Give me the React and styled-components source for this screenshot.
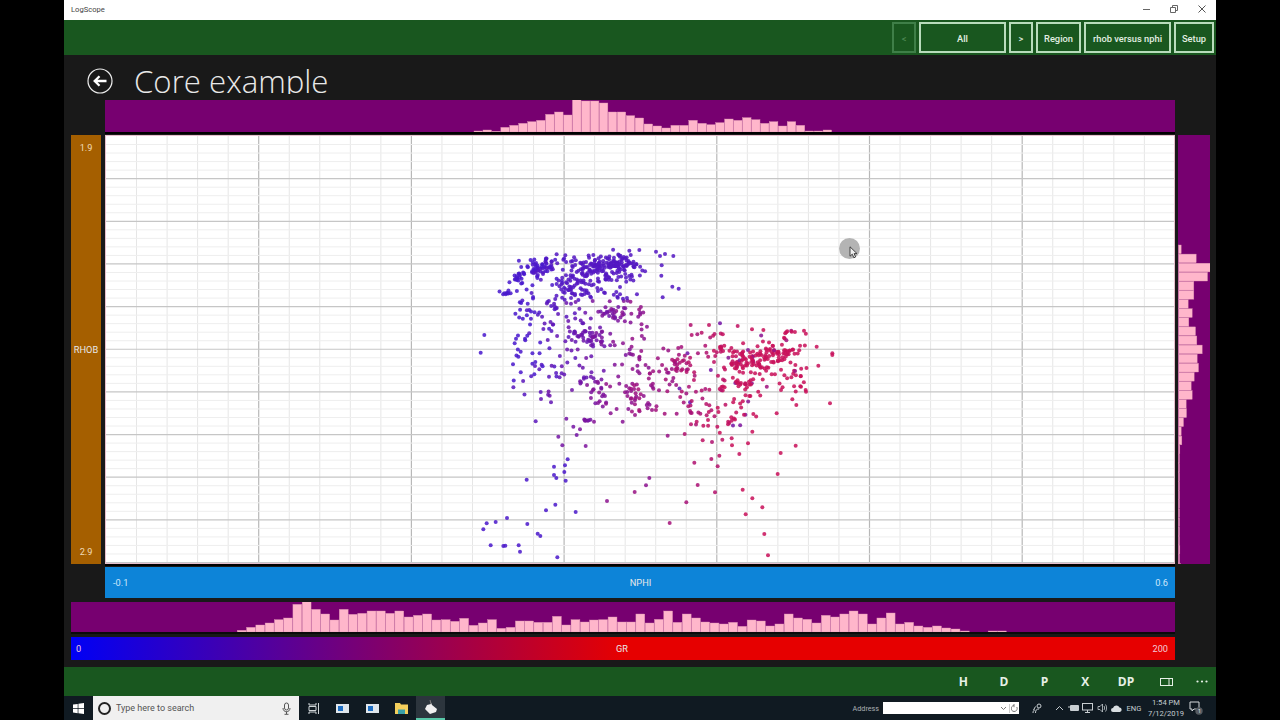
import React from "react";
import styled, { createGlobalStyle } from "styled-components";

const Global = createGlobalStyle`
  html, body { margin: 0; padding: 0; background: #000; height: 100%; overflow: hidden; }
  * { box-sizing: border-box; }
  body { font-family: Roboto, "Open Sans", "Liberation Sans", sans-serif; }
`;

const Page = styled.div`width:1280px;height:720px;background:#000;display:flex;justify-content:center;`;
const Window = styled.div`width:1152px;height:720px;display:flex;flex-direction:column;background:#191919;`;

const TitleBar = styled.div`height:20px;background:#fff;display:flex;align-items:center;padding:0 0 2px 7px;color:#444;font-size:7.6px;`;
const TitleText = styled.span`flex:1;`;
const WinControl = styled.span`width:28px;height:18px;display:flex;align-items:center;justify-content:center;color:#555;`;
const WinControls = styled.div`display:flex;`;

const TopBar = styled.div`height:35px;background:#19571f;display:flex;justify-content:flex-end;align-items:center;gap:3px;padding-right:2px;`;
const ActionButton = styled.button`
  width:${p => p.$w}px;height:31px;margin:0;padding:1px 0 0;background:#19571f;
  border:2px solid ${p => (p.$off ? "#3f7f48" : "#b9dcbc")};
  color:${p => (p.$off ? "#4f8a55" : "#e2efe2")};
  font:500 9.3px Roboto, sans-serif;
`;

const Heading = styled.div`height:45px;display:flex;align-items:flex-start;padding-left:23px;gap:21px;overflow:hidden;`;
const BackButton = styled.div`width:26px;height:26px;margin-top:13px;color:#fff;display:flex;`;
const Title = styled.h1`margin:0;height:39px;overflow:hidden;font:300 31.2px/52px "Open Sans", sans-serif;color:#e8e8e8;`;

const ChartGrid = styled.div`
  display:grid;padding-left:7px;
  grid-template-columns:30px 4px 1070px 3px 32px;
  grid-template-rows:32px 3px 429px 3px 31px 4px 30px 5px 23px;
`;
const TopHist = styled.div`grid-column:3;grid-row:1;background:#770070;box-shadow:0 2px 0 #000;`;
const YAxis = styled.div`grid-column:1;grid-row:3;background:#a55f00;color:#f1dcb8;font-size:9.2px;display:flex;flex-direction:column;align-items:center;justify-content:space-between;padding:7px 0 7px;`;
const Plot = styled.div`grid-column:3;grid-row:3;position:relative;background:#fff;border:1px solid #e6bfcd;box-shadow:0 2px 0 #000;`;
const SideHist = styled.div`grid-column:5;grid-row:3;background:#770070;`;
const XAxis = styled.div`grid-column:3;grid-row:5;background:#0d84d8;color:#cfe8fb;font-size:9.2px;display:grid;grid-template-columns:1fr auto 1fr;align-items:center;padding:0 7px 0 8px;`;
const BottomHist = styled.div`grid-column:1 / 4;grid-row:7;background:#770070;box-shadow:0 2px 0 #0a0a0a;`;
const ColorBar = styled.div`grid-column:1 / 4;grid-row:9;background:linear-gradient(90deg,#0000f5 0%,#e60000 50%);color:#f3c9d8;font-size:9.2px;display:grid;grid-template-columns:1fr auto 1fr;align-items:center;padding:0 7px 0 5px;`;
const AxisName = styled.span`color:#e8e8e8;`;
const AxisMax = styled.span`text-align:right;`;
const Graphic = styled.svg`display:block;width:100%;height:100%;`;

const CommandBar = styled.div`height:29px;margin-top:7px;background:#19571f;display:flex;justify-content:flex-end;align-items:center;color:#e6f0e6;`;
const Cmd = styled.span`width:${p => p.$w || 40.7}px;text-align:center;font:700 12px "Open Sans", sans-serif;display:flex;justify-content:center;`;

const Taskbar = styled.div`height:24px;background:#101a22;display:flex;align-items:center;color:#d8dde0;`;
const StartBtn = styled.div`width:29px;display:flex;justify-content:center;`;
const SearchBox = styled.div`width:206px;height:24px;background:#f0f0f0;display:flex;align-items:center;padding:0 8px 0 5px;color:#555;font-size:9px;`;
const SearchCircle = styled.span`width:13px;height:13px;border:2px solid #222;border-radius:50%;margin-right:5px;`;
const SearchText = styled.span`flex:1;`;
const TaskIcon = styled.div`width:29.3px;height:24px;display:flex;align-items:center;justify-content:center;background:${p => (p.$active ? "#2c353d" : "transparent")};border-bottom:${p => (p.$active ? "2px solid #58c8a8" : "none")};`;
const TaskGap = styled.div`flex:1;`;
const AddressLabel = styled.span`font-size:7.2px;color:#aab0b4;margin-right:4px;`;
const AddressBox = styled.div`width:136px;height:12px;background:#fff;margin-right:3px;display:flex;align-items:center;justify-content:flex-end;color:#777;`;
const AddrIcon = styled.span`width:${p => p.$w}px;display:flex;justify-content:center;border-left:${p => (p.$sep ? "1px solid #ccc" : "none")};`;
const Tray = styled.div`display:flex;align-items:center;width:${p => p.$w}px;justify-content:center;`;
const TrayText = styled.span`font-size:7.6px;color:#c4cbd0;`;
const Clock = styled.div`width:44px;font-size:7.6px;line-height:11px;text-align:center;color:#c4cbd0;`;

const Halo = styled.span`position:absolute;left:733px;top:102px;width:21px;height:21px;border-radius:50%;background:#b4b4b4;`;
const Pointer = styled.svg`position:absolute;left:743px;top:110px;width:9px;height:13px;`;

/* ---- histogram data, measured off the picture ---- */
const topBars = [3,6,2,14,20,26,31,35,53,60,51,97,93,93,87,60,60,49,42,24,18,12,20,20,35,26,22,28,39,35,43,37,26,31,18,31,20,3,3,6].map(v => v / 3);
const bottomBars = [5,14,21,27,37,42,83,92,68,54,36,68,53,56,63,63,56,63,45,50,54,36,37,32,41,20,27,37,11,14,33,33,29,29,47,21,37,30,36,37,45,30,30,54,27,38,63,29,54,42,30,27,24,29,17,36,33,18,24,54,42,38,27,50,45,54,63,54,24,42,57,24,29,18,14,18,12,9,3,0,0,3,3].map(v => v / 3);
const sideBars = [8,53,96,87,46,46,29,41,31,51,55,71,56,60,47,38,41,23,24,15,8,10,4,3,3,3,3,3,3,3,3,3,3,4,3,6].map(v => v / 3);

function HBars({ width, height, data, start, step }) {
  return (
    <Graphic viewBox={`0 0 ${width} ${height}`} preserveAspectRatio="none">
      {data.map((v, i) => v > 0 && (
        <rect key={i} x={start + i * step} y={height - v} width={step - 0.4} height={v} fill="#ffb6cb" stroke="#d98fb0" strokeWidth=".4" />
      ))}
    </Graphic>
  );
}

function SideBars() {
  return (
    <Graphic viewBox="0 0 32 429" preserveAspectRatio="none">
      {sideBars.map((v, i) => (
        <rect key={i} x="0.5" y={110 + i * 9.1} width={v} height={8.7} fill="#ffb6cb" stroke="#d98fb0" strokeWidth=".4" />
      ))}
    </Graphic>
  );
}

/* ---- scatter: coordinates are measured in a 3x crop whose corner is (470,240) ---- */
let seed = 12345;
const rnd = () => { seed = (seed * 16807) % 2147483647; return seed / 2147483647; };
const gauss = () => (rnd() + rnd() + rnd() - 1.5) / 0.5;

const denseCores = [
  [390,85,52,20,125],[460,68,28,12,34],[310,135,22,20,40],[232,68,20,16,20],[190,95,26,12,28],[135,115,13,8,10],[110,160,10,6,9],
  [340,285,32,14,36],[440,215,24,11,15],[400,300,25,12,12],[840,360,42,14,56],[905,345,42,14,38],[620,375,24,14,22],[810,430,20,6,14],
  [745,328,14,8,8],[965,395,14,12,8],[385,490,12,8,5],[355,542,14,4,6],
];
const wideAreas = [
  [130,60,520,240,150],[130,240,540,470,115],[650,270,1010,470,110],[480,320,700,500,45],[380,430,560,520,32],[660,470,860,580,34],
];
const sparse = [
  [40,868],[50,850],[77,846],[111,834],[172,852],[203,881],[211,888],[62,916],[100,918],[106,917],[146,916],[150,935],[262,952],
  [228,811],[256,794],[317,816],[170,719],[252,680],[285,676],[293,658],[283,696],[252,705],[259,714],[287,722],[411,783],[494,756],
  [528,736],[538,714],[599,849],[649,787],[683,735],[735,757],[818,749],[847,775],[877,802],[827,823],[883,882],[894,946],[923,702],
  [932,639],[977,617],[834,610],[847,575],[808,642],[748,647],[724,657],[743,679],[673,668],[698,601],[726,606],[757,599],[785,595],
  [786,616],[593,587],[644,582],[347,618],[277,616],[265,590],[197,544],[213,477],[239,467],[243,487],[43,285],[32,338],[129,373],
  [610,48],[585,42],[570,48],[558,35],[508,30],[478,32],[607,140],[626,146],[578,172],[575,76],[574,107],[1087,340],[1087,345],
  [1045,377],[1080,490],[1040,320],[1008,455],[993,440],[979,495],[967,478],[920,520],[850,522],[822,524],[785,542],[742,560],
  [663,553],[680,545],[700,557],[691,521],[710,526],[724,511],[584,521],[620,521],[665,519],[495,525],[475,507],[546,510],[458,545],
  [372,545],[345,542],[289,536],[320,585],[330,568],[310,560],[138,296],[165,296],[134,310],[152,335],[145,350],[195,378],[208,388],
  [193,403],[237,410],[275,400],[662,255],[717,255],[750,250],[803,258],[846,268],[1002,272],[965,275],[665,285],[682,283],
];
const colorFor = (x, y) => {
  let t = (x - 170) / 620 + (rnd() - 0.5) * 0.2;
  if (y > 420 && x < 520) t += 0.12;
  if (y < 180) t = Math.min(t, 0.14) - 0.05;
  if (y > 640 && x < 320) t = 0.02;
  if (x > 600 && y < 640 && rnd() < 0.05) t -= 0.55;
  t = Math.max(0, Math.min(1, t));
  const r = Math.round(72 + t * 128), g = Math.round(24 - t * 8), b = Math.round(205 - t * 115);
  return `rgb(${r},${g},${b})`;
};
const dots = [];
denseCores.forEach(([cx, cy, rx, ry, n]) => {
  for (let i = 0; i < n; i++) dots.push([cx + gauss() * rx, cy + gauss() * ry]);
});
wideAreas.forEach(([x0, y0, x1, y1, n]) => {
  for (let i = 0; i < n; i++) dots.push([x0 + rnd() * (x1 - x0), y0 + rnd() * (y1 - y0)]);
});
sparse.forEach(p => dots.push(p));
const points = dots.map(([zx, zy]) => ({
  x: 470 + zx / 3 - 106, y: 240 + zy / 3 - 136, c: colorFor(zx, zy),
}));

const minorX = Array.from({ length: 35 }, (_, i) => (i + 1) * 30.54);
const minorY = Array.from({ length: 50 }, (_, i) => (i + 1) * 8.53);

function PlotArea() {
  return (
    <Graphic viewBox="0 0 1068 427" preserveAspectRatio="none">
      {minorX.map((x, i) => (
        <line key={i} x1={x} x2={x} y1="0" y2="427" stroke={(i + 1) % 5 === 0 ? "#b8b8b8" : "#e6e6e6"} strokeWidth={(i + 1) % 5 === 0 ? 1.2 : 1} />
      ))}
      {minorY.map((y, i) => (
        <line key={i} x1="0" x2="1068" y1={y} y2={y} stroke={(i + 1) % 5 === 0 ? "#c6c6c6" : "#eeeeee"} strokeWidth={(i + 1) % 5 === 0 ? 1.2 : 1} />
      ))}
      {points.map((p, i) => <circle key={i} cx={p.x} cy={p.y} r="2" fill={p.c} opacity=".86" />)}
    </Graphic>
  );
}

/* ---- icons ---- */
const Svg = ({ w, h, children, ...rest }) => <svg width={w} height={h} viewBox={`0 0 ${w} ${h}`} fill="none" {...rest}>{children}</svg>;

const BackIcon = () => (
  <Svg w={26} h={26}>
    <circle cx="13" cy="13" r="12" stroke="#eee" strokeWidth="1.2" />
    <path d="M19.5 13H8M12.5 8.2 7.7 13l4.8 4.8" stroke="#fff" strokeWidth="2.3" />
  </Svg>
);
const WinLogo = () => (
  <Svg w={11} h={11}><path d="M0 1.6 4.7.9v4.3H0zM5.4.8 11 0v5.2H5.4zM0 5.9h4.7v4.3L0 9.5zM5.4 5.9H11V11l-5.6-.8z" fill="#fff" /></Svg>
);
const MicIcon = () => (
  <Svg w={9} h={13}><rect x="2.5" y="1" width="4" height="7" rx="2" stroke="#555" /><path d="M1 6c0 5 7 5 7 0M4.5 9.5V12M2.5 12.3h4" stroke="#555" /></Svg>
);
const TaskViewIcon = () => (
  <Svg w={12} h={11}><path d="M1 0v2h7V0M1 3.5h7v4H1zM1 11V9h7v2M10.5 0v11" stroke="#cfd5d8" /></Svg>
);
const WindowAppIcon = () => (
  <Svg w={13} h={9}><rect width="13" height="9" fill="#dfe6ec" /><rect x="2" y="2" width="5" height="5" fill="#1e6fc4" /></Svg>
);
const FolderIcon = () => (
  <Svg w={13} h={12}><path d="M0 1h5l1 1.5h7V12H0z" fill="#f3cf5c" /><rect x="3" y="7.5" width="7" height="4.5" fill="#3aa0a8" /></Svg>
);
const AppIcon = () => (
  <Svg w={13} h={14}><path d="M6 0 7 4 3 5 1 9l5 5 6-2 1-3-5-4z" fill="#f0f0f0" /><path d="M6 0 7 4" stroke="#777" /></Svg>
);
const Chevron = ({ color = "#777" }) => <Svg w={7} h={5}><path d="m1 1 2.5 2.5L6 1" stroke={color} /></Svg>;
const RefreshIcon = () => <Svg w={7} h={9}><path d="M3 1.5a3 3 0 1 0 2.8 1.5M3 0v3.2" stroke="#777" /></Svg>;
const PeopleIcon = () => (
  <Svg w={11} h={11}><circle cx="7" cy="3" r="2" stroke="#c8ced2" /><path d="M3.5 10c0-3 1-4 3.5-4M1 10c0-2 .7-3 2-3M3.5 3.5 1.5 7" stroke="#c8ced2" /></Svg>
);
const CaretUp = () => <Svg w={9} h={6}><path d="m1 5 3.5-3.5L8 5" stroke="#c8ced2" /></Svg>;
const BatteryIcon = () => <Svg w={11} h={8}><rect x="2" y="1" width="9" height="6" rx="1" fill="#c8ced2" /><path d="M0 3h2" stroke="#c8ced2" /></Svg>;
const NetIcon = () => <Svg w={11} h={10}><rect x=".5" y=".5" width="10" height="6.5" stroke="#c8ced2" /><path d="M5.5 7v2.5M3 9.5h5" stroke="#c8ced2" /></Svg>;
const VolumeIcon = () => <Svg w={10} h={10}><path d="M1 3.5h2L5.5 1v8L3 6.5H1zM7 3c.8 1.2.8 2.8 0 4M8.5 1.5c1.5 2 1.5 5 0 7" stroke="#c8ced2" strokeWidth=".8" /></Svg>;
const CloudIcon = () => <Svg w={11} h={7}><path d="M2 7a2 2 0 0 1 0-4 3.5 3.5 0 0 1 6.5-.5A2.3 2.3 0 0 1 9 7z" fill="#d8dde0" /></Svg>;
const NoteIcon = () => (
  <Svg w={15} h={14}>
    <path d="M1 1h9v7H5L3 10V8H1z" stroke="#d4d9dc" />
    <circle cx="10" cy="10" r="3.7" fill="#555c62" />
    <text x="8.8" y="12.3" fontSize="6" fill="#eee" fontFamily="Open Sans, sans-serif">1</text>
  </Svg>
);
const PanelIcon = () => <Svg w={13} h={8}><rect x=".5" y=".5" width="12" height="7" stroke="#e6f0e6" /><path d="M9 0v8" stroke="#e6f0e6" /></Svg>;
const DotsIcon = () => <Svg w={12} h={3}><circle cx="1.5" cy="1.5" r="1.1" fill="#e6f0e6" /><circle cx="6" cy="1.5" r="1.1" fill="#e6f0e6" /><circle cx="10.5" cy="1.5" r="1.1" fill="#e6f0e6" /></Svg>;

export default function App() {
  return (
    <Page>
      <Global />
      <Window>
        <TitleBar>
          <TitleText>LogScope</TitleText>
          <WinControls>
            <WinControl><Svg w={7} h={3}><path d="M0 1.5h7" stroke="#666" /></Svg></WinControl>
            <WinControl><Svg w={8} h={8}><path d="M.5 2.5h5v5h-5zM2.5 2.5v-2h5v5h-2" stroke="#666" /></Svg></WinControl>
            <WinControl><Svg w={8} h={8}><path d="m.5.5 7 7m0-7-7 7" stroke="#555" /></Svg></WinControl>
          </WinControls>
        </TitleBar>
        <TopBar>
          <ActionButton $w={24} $off>&lt;</ActionButton>
          <ActionButton $w={87}>All</ActionButton>
          <ActionButton $w={24}>&gt;</ActionButton>
          <ActionButton $w={45}>Region</ActionButton>
          <ActionButton $w={87}>rhob versus nphi</ActionButton>
          <ActionButton $w={40}>Setup</ActionButton>
        </TopBar>
        <Heading>
          <BackButton><BackIcon /></BackButton>
          <Title>Core example</Title>
        </Heading>
        <ChartGrid>
          <TopHist><HBars width={1070} height={32} data={topBars} start={369} step={8.95} /></TopHist>
          <YAxis><span>1.9</span><AxisName>RHOB</AxisName><span>2.9</span></YAxis>
          <Plot>
            <PlotArea />
            <Halo />
            <Pointer viewBox="0 0 9 13"><path d="M1 .8v9.400l2.300-2 1.600 3.600 1.700-.8-1.500-3.400H8z" fill="#efefef" stroke="#333" strokeWidth=".9" /></Pointer>
          </Plot>
          <SideHist><SideBars /></SideHist>
          <XAxis><span>-0.1</span><AxisName>NPHI</AxisName><AxisMax>0.6</AxisMax></XAxis>
          <BottomHist><HBars width={1104} height={30} data={bottomBars} start={166.3} step={9.27} /></BottomHist>
          <ColorBar><span>0</span><AxisName>GR</AxisName><AxisMax>200</AxisMax></ColorBar>
        </ChartGrid>
        <CommandBar>
          <Cmd>H</Cmd><Cmd>D</Cmd><Cmd>P</Cmd><Cmd>X</Cmd><Cmd>DP</Cmd>
          <Cmd><PanelIcon /></Cmd>
          <Cmd $w={29}><DotsIcon /></Cmd>
        </CommandBar>
        <Taskbar>
          <StartBtn><WinLogo /></StartBtn>
          <SearchBox>
            <SearchCircle />
            <SearchText>Type here to search</SearchText>
            <MicIcon />
          </SearchBox>
          <TaskIcon><TaskViewIcon /></TaskIcon>
          <TaskIcon><WindowAppIcon /></TaskIcon>
          <TaskIcon><WindowAppIcon /></TaskIcon>
          <TaskIcon><FolderIcon /></TaskIcon>
          <TaskIcon $active><AppIcon /></TaskIcon>
          <TaskGap />
          <AddressLabel>Address</AddressLabel>
          <AddressBox>
            <AddrIcon $w={11}><Chevron /></AddrIcon>
            <AddrIcon $w={10} $sep><RefreshIcon /></AddrIcon>
          </AddressBox>
          <Tray $w={30}><PeopleIcon /></Tray>
          <Tray $w={14}><CaretUp /></Tray>
          <Tray $w={14}><BatteryIcon /></Tray>
          <Tray $w={15}><NetIcon /></Tray>
          <Tray $w={14}><VolumeIcon /></Tray>
          <Tray $w={15}><CloudIcon /></Tray>
          <Tray $w={20}><TrayText>ENG</TrayText></Tray>
          <Clock>1:54 PM<br />7/12/2019</Clock>
          <Tray $w={16}><NoteIcon /></Tray>
          <Tray $w={12} />
        </Taskbar>
      </Window>
    </Page>
  );
}
